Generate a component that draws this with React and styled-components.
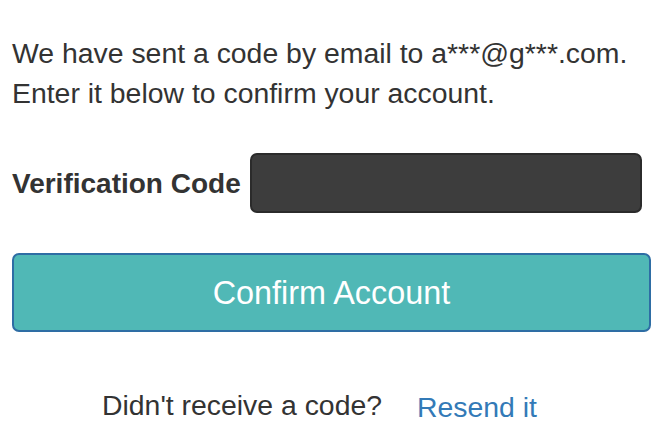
import React from 'react'
import styled, { createGlobalStyle } from 'styled-components'

const GlobalStyle = createGlobalStyle`
    body {
        margin: 0;
        background: #fff;
        font-family: "Liberation Sans", Arial, sans-serif;
        color: #333;
    }
`

const Page = styled.div`
    width: 639px;
    padding: 33px 19px 0 12px;
`

const Message = styled.p`
    margin: 0;
    font-size: 28.4px;
    line-height: 40px;
`

const FieldRow = styled.div`
    display: flex;
    align-items: center;
    gap: 9px;
    margin-top: 40px;
`

const Label = styled.label`
    font-size: 28px;
    font-weight: bold;
    white-space: nowrap;
    padding-top: 2px;
`

const CodeInput = styled.input`
    box-sizing: border-box;
    width: 392px;
    height: 60px;
    background: #3d3d3d;
    border: 2px solid #2b2b2b;
    border-radius: 7px;
    color: #fff;
    font-size: 28px;
    padding: 0 12px;
    outline: none;
`

const ConfirmButton = styled.button`
    display: block;
    box-sizing: border-box;
    width: 639px;
    height: 79px;
    margin-top: 40px;
    padding-top: 3px;
    background: #50b8b6;
    border: 2px solid #2e6da4;
    border-radius: 7px;
    color: #fff;
    font-family: "Liberation Sans", Arial, sans-serif;
    font-size: 32.4px;
    cursor: pointer;
`

const ResendRow = styled.div`
    display: flex;
    justify-content: center;
    align-items: baseline;
    gap: 35px;
    margin-top: 53px;
    padding-right: 24px;
    font-size: 28.4px;
    line-height: 40px;
`

const ResendLink = styled.a`
    color: #337ab7;
    text-decoration: none;
    position: relative;
    top: 2px;
`

export default function App() {
    return (
        <Page>
            <GlobalStyle />
            <Message>
                We have sent a code by email to a***@g***.com.
                <br />
                Enter it below to confirm your account.
            </Message>
            <FieldRow>
                <Label htmlFor="code">Verification Code</Label>
                <CodeInput id="code" name="code" type="text" />
            </FieldRow>
            <ConfirmButton>Confirm Account</ConfirmButton>
            <ResendRow>
                <span>Didn't receive a code?</span>
                <ResendLink href="#">Resend it</ResendLink>
            </ResendRow>
        </Page>
    )
}
